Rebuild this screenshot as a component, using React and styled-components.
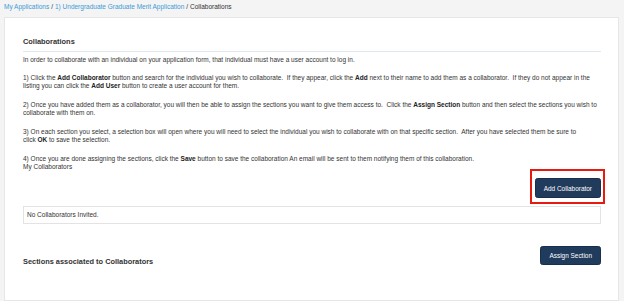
import React from "react";
import styled, { createGlobalStyle } from "styled-components";

const GlobalStyle = createGlobalStyle`
  html, body {
    margin: 0;
    padding: 0;
    background: #f4f4f4;
  }
  body {
    font-family: "Liberation Sans", Arial, sans-serif;
    color: #333;
  }
  * {
    box-sizing: border-box;
  }
`;

const Page = styled.div`
  width: 624px;
  height: 301px;
  padding: 0 5px 0 4px;
  overflow: hidden;
`;

const Breadcrumb = styled.div`
  height: 17px;
  display: flex;
  align-items: center;
  gap: 2px;
  font-size: 6.5px;
  color: #333;
  padding-bottom: 4px;
`;

const Crumb = styled.a`
  color: #3d9ad6;
  text-decoration: none;
`;

const Card = styled.div`
  background: #fff;
  border: 1px solid #e6e6e6;
  padding: 18px 17px 33px 18px;
`;

const Title = styled.h2`
  margin: 0;
  font-size: 7.4px;
  line-height: 11px;
  font-weight: bold;
  color: #333;
  padding-bottom: 4px;
  border-bottom: 1px solid #dfe8ef;
`;

const Body = styled.div`
  margin-top: 3.5px;
  display: flex;
  flex-direction: column;
  gap: 9.8px;
`;

const Para = styled.div`
  font-size: 6.5px;
  line-height: 8.6px;
  color: #333;

  b {
    font-weight: bold;
    color: #222;
  }
`;

// one rendered line of a paragraph, kept as in the original wrap
const Line = styled.div`
  white-space: nowrap;
`;

const ButtonRow = styled.div`
  display: flex;
  justify-content: flex-end;
  margin-top: ${(p) => p.$top || 0}px;
`;

const Highlight = styled.div`
  position: relative;

  &::after {
    content: "";
    position: absolute;
    top: -8px;
    bottom: -6px;
    left: -4.5px;
    right: -4px;
    border: 2px solid #e8190f;
    pointer-events: none;
  }
`;

const Button = styled.button`
  height: ${(p) => p.$h}px;
  padding: 0 8px;
  border: 1px solid #16304e;
  border-radius: 2.5px;
  background: #203b5c;
  color: #fff;
  font-family: "Liberation Sans", Arial, sans-serif;
  font-size: 6.45px;
  cursor: pointer;
`;

const EmptyBox = styled.div`
  margin-top: 7.7px;
  height: 18px;
  border: 1px solid #e3e3e3;
  display: flex;
  align-items: center;
  padding-left: 3px;
  font-size: 6.5px;
  color: #333;
`;

const SectionRow = styled.div`
  margin-top: 22.3px;
  display: flex;
  justify-content: space-between;
  align-items: flex-start;
`;

const SectionTitle = styled.h3`
  margin: 0;
  padding-top: 10.7px;
  font-size: 7.4px;
  line-height: 10px;
  font-weight: bold;
  color: #333;
`;

export default function App() {
  return (
    <>
      <GlobalStyle />
      <Page>
        <Breadcrumb>
          <Crumb href="#">My Applications</Crumb>
          <span>/</span>
          <Crumb href="#">1) Undergraduate Graduate Merit Application</Crumb>
          <span>/ Collaborations</span>
        </Breadcrumb>
        <Card>
          <Title>Collaborations</Title>
          <Body>
            <Para>
              In order to collaborate with an individual on your application
              form, that individual must have a user account to log in.
            </Para>
            <Para>
              <Line>
                1) Click the <b>Add Collaborator</b> button and search for the
                individual you wish to collaborate.&nbsp; If they appear, click
                the <b>Add</b> next to their name to add them as a
                collaborator.&nbsp; If they do not appear in the
              </Line>
              <Line>
                listing you can click the <b>Add User</b> button to create a
                user account for them.
              </Line>
            </Para>
            <Para>
              <Line>
                2) Once you have added them as a collaborator, you will then be
                able to assign the sections you want to give them access
                to.&nbsp; Click the <b>Assign Section</b> button and then
                select the sections you wish to
              </Line>
              <Line>collaborate with them on.</Line>
            </Para>
            <Para>
              <Line>
                3) On each section you select, a selection box will open where
                you will need to select the individual you wish to collaborate
                with on that specific section.&nbsp; After you have selected
                them be sure to
              </Line>
              <Line>
                click <b>OK</b> to save the selection.
              </Line>
            </Para>
            <Para>
              <Line>
                4) Once you are done assigning the sections, click the{" "}
                <b>Save</b> button to save the collaboration An email will be
                sent to them notifying them of this collaboration.
              </Line>
              <Line>My Collaborators</Line>
            </Para>
          </Body>
          <ButtonRow $top={4.5}>
            <Highlight>
              <Button $h={20}>Add Collaborator</Button>
            </Highlight>
          </ButtonRow>
          <EmptyBox>No Collaborators Invited.</EmptyBox>
          <SectionRow>
            <SectionTitle>Sections associated to Collaborators</SectionTitle>
            <Button $h={19}>Assign Section</Button>
          </SectionRow>
        </Card>
      </Page>
    </>
  );
}
